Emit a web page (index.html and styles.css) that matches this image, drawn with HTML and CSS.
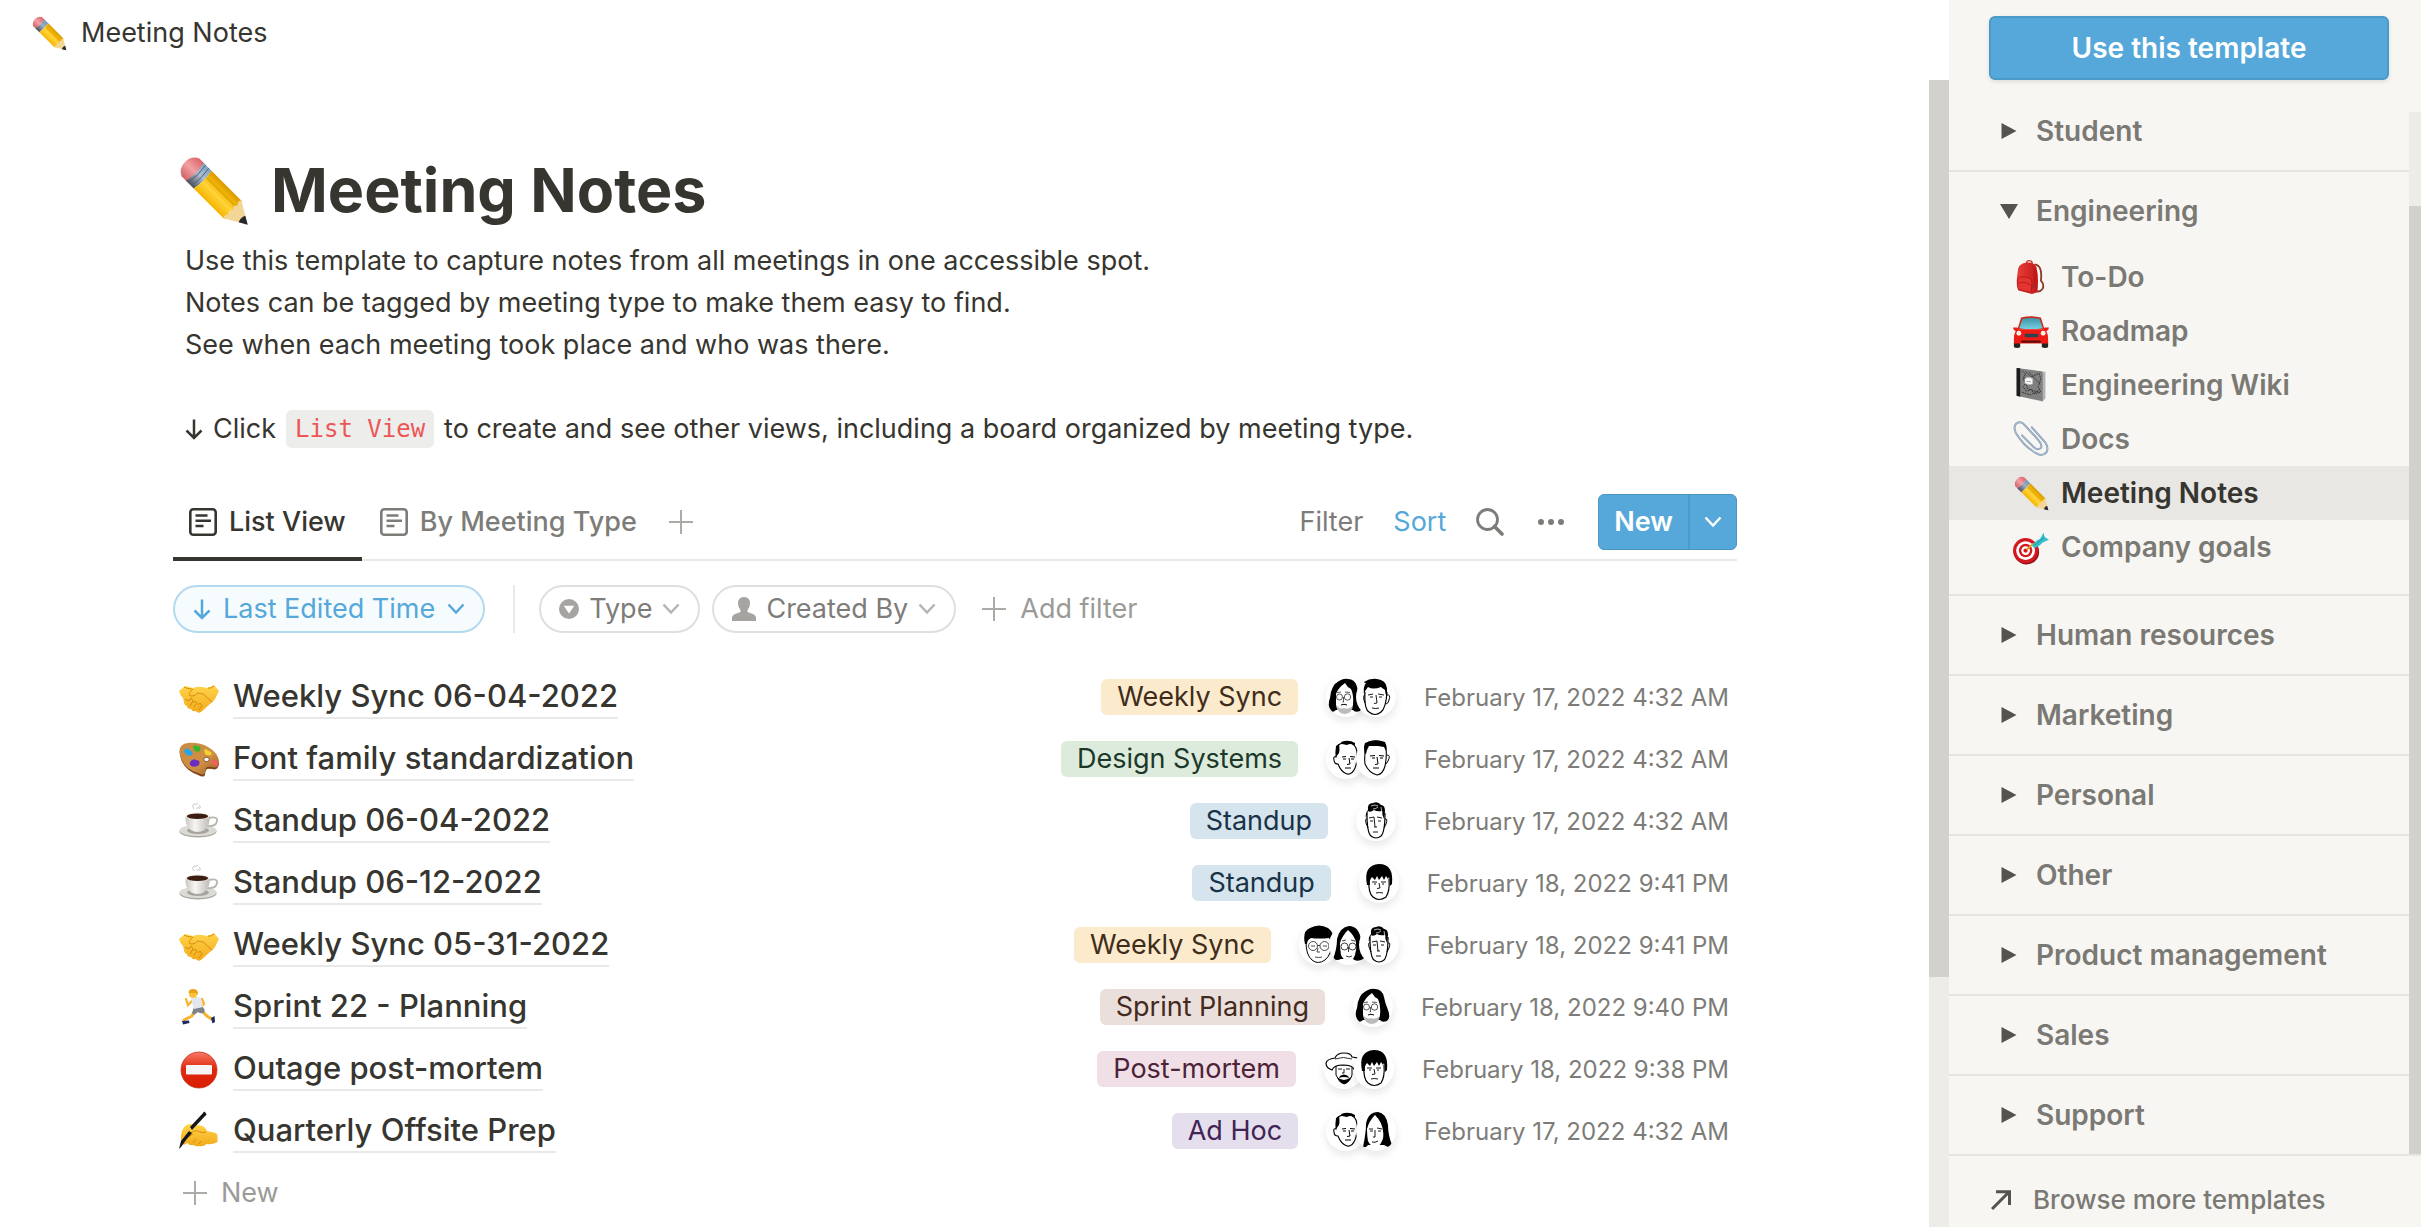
FILE: index.html
```html
<!DOCTYPE html>
<html lang="en">
<head>
<meta charset="utf-8">
<meta name="viewport" content="width=device-width, initial-scale=1">
<title>Meeting Notes</title>
<link rel="stylesheet" href="styles.css">
</head>
<body>
<svg class="sprite" aria-hidden="true">
  <defs>
    <linearGradient id="g-body" x1="0" y1="0" x2="0" y2="1"><stop offset="0" stop-color="#d99a00"/><stop offset=".3" stop-color="#f2b604"/><stop offset=".55" stop-color="#ffd43a"/><stop offset="1" stop-color="#f5b400"/></linearGradient>
    <linearGradient id="g-metal" x1="0" y1="0" x2="0" y2="1"><stop offset="0" stop-color="#7da2c8"/><stop offset=".45" stop-color="#a9bdd3"/><stop offset="1" stop-color="#4c5058"/></linearGradient>
    <linearGradient id="g-pink" x1="0" y1="0" x2="0" y2="1"><stop offset="0" stop-color="#d9656c"/><stop offset=".5" stop-color="#f3a0a2"/><stop offset="1" stop-color="#cf6468"/></linearGradient>
    <linearGradient id="g-skin" x1="0" y1="0" x2="0" y2="1"><stop offset="0" stop-color="#ffd54a"/><stop offset="1" stop-color="#f2a91c"/></linearGradient>
    <linearGradient id="g-wood" x1="0" y1="0" x2="1" y2="1"><stop offset="0" stop-color="#c98a45"/><stop offset=".6" stop-color="#cf8f43"/><stop offset="1" stop-color="#9a5a26"/></linearGradient>
    <linearGradient id="g-stop" x1="0" y1="0" x2="0" y2="1"><stop offset="0" stop-color="#f77a66"/><stop offset=".45" stop-color="#e02a10"/><stop offset="1" stop-color="#d81e05"/></linearGradient>
    <linearGradient id="g-cup" x1="0" y1="0" x2="1" y2="0"><stop offset="0" stop-color="#c9c6c0"/><stop offset=".4" stop-color="#f7f6f3"/><stop offset="1" stop-color="#bfbcb6"/></linearGradient>
    <linearGradient id="g-glass" x1="0" y1="0" x2="0" y2="1"><stop offset="0" stop-color="#3e93a8"/><stop offset="1" stop-color="#74d3e2"/></linearGradient>
    <linearGradient id="g-red" x1="0" y1="0" x2="1" y2="0"><stop offset="0" stop-color="#e8403a"/><stop offset="1" stop-color="#c21717"/></linearGradient>
  </defs>

  <symbol id="pencil" viewBox="0 0 40 40">
    <g transform="translate(5 5) rotate(45)">
      <path d="M8-7H3.500Q-.8-5-.8 0T3.500 7H8z" fill="url(#g-pink)"/>
      <path d="M7-7h6q1.500 7 0 14H7q1.500-7 0-14z" fill="url(#g-metal)"/>
      <path d="M8.500-7q1.400 7 0 14M11-7q1.400 7 0 14" stroke="#58616c" stroke-width=".5" fill="none"/>
      <path d="M13-7h24l2 7-2 7H13q1.500-7 0-14z" fill="url(#g-body)"/>
      <path d="M14 -2.400h23.500" stroke="#d69a05" stroke-width=".6"/>
      <path d="M36.500-7L48.500 0 36.500 7Q35 5.500 37 3.500 34.500 2 37 0 34.500-2 37-3.500 35-5.500 36.500-7z" fill="#f3d596"/>
      <path d="M44-2.600L48.500 0 44 2.600q-1.300-2.600 0-5.200z" fill="#26262c"/>
    </g>
  </symbol>

  <symbol id="handshake" viewBox="0 0 40 40">
    <path d="M0 14l6-5 8 2q5-2 9-1l6 1 6-3 5 6-4 8q-2 3-5 5l-9 8q-3 2-5-1-4 1-5-2-4 0-4-3-3-1-3-4L4 21q-3-3-4-7z" fill="url(#g-skin)"/>
    <path d="M5 10q3 2 8 2M14 12q-5 4-3 7 4 1 8-3l5 1 9 8M6 22l4 2 2-3 2 3-3 5M14 26l2-2 2 2-3 4M19 28l2-2 2 3-3 4M35 9q-3 3-6 2" fill="none" stroke="#d98c0c" stroke-width="1"/>
  </symbol>

  <symbol id="palette" viewBox="0 0 40 40">
    <path d="M1 16Q-1 6 9 5q11-1 20 4 11 6 11 16-1 7-7 5-5-1-6 1t-1 5q-1 3-7 0Q3 30 1 16z" fill="#7d4518"/>
    <path d="M1 15Q-1 5 9 4q11-1 20 4 11 6 11 16-1 6-7 4-5-1-6 1t-1 5q-1 3-7 0Q3 29 1 15z" fill="url(#g-wood)"/>
    <ellipse cx="27.500" cy="20.500" rx="2.700" ry="2.200" fill="#fff" stroke="#6b3b13" stroke-width=".8"/>
    <path d="M5 11q4-3 6 0 4 3 2 5-4 2-6-1-3-2-2-4z" fill="#28a6e8"/>
    <path d="M14 8q1-3 4-1 5 0 3 5-4 2-6-1z" fill="#35b530"/>
    <path d="M25 11q2-2 5 1 4 2 2 4-4 1-6-1z" fill="#f4d12c"/>
    <path d="M32 22q3-3 6 0 2 5-1 5-4-1-5-5z" fill="#f1605c"/>
    <path d="M11 23q3-4 6-2 5 0 3 5-4 3-8 1-2-2-1-4z" fill="#6a2fc0"/>
  </symbol>

  <symbol id="coffee" viewBox="0 0 40 40">
    <ellipse cx="19" cy="30.500" rx="18.500" ry="6" fill="#aaa7a0"/>
    <ellipse cx="19" cy="29.500" rx="18.500" ry="5.500" fill="#dcdad5"/>
    <ellipse cx="19" cy="29.500" rx="11" ry="3.500" fill="#a8a49d"/>
    <path d="M30 17q9-2 8 3-1 6-10 5" fill="none" stroke="#b9b6b0" stroke-width="1.800"/>
    <path d="M6.500 15h24q1 9-5 14-7 4-14 0-6-5-5-14z" fill="url(#g-cup)"/>
    <ellipse cx="18.500" cy="15" rx="12" ry="3.600" fill="#f1efeb"/>
    <ellipse cx="18.500" cy="15.300" rx="10.700" ry="2.800" fill="#3c1d12"/>
    <path d="M15 8q-3-3 0-5 2 1 4-1M20 8q3-2 0-4M17 7q2 1 3-1" fill="none" stroke="#c9c9c9" stroke-width="1"/>
  </symbol>

  <symbol id="runner" viewBox="0 0 40 40">
    <path d="M17 21l-4 8-8 4M23 24l5 5 6 4" fill="none" stroke="#f6b32e" stroke-width="3" stroke-linecap="round"/>
    <path d="M3 34l7-.5 .5 2.500-6.500 1.500zM32 31l3.500-2 .5 6-2.500 1.500z" fill="#1d2a66"/>
    <path d="M14 13l-5 5-2-6M23 12l2 5-4 4" fill="none" stroke="#f6b32e" stroke-width="2.300" stroke-linecap="round"/>
    <path d="M15 20l8-1q4 4 2 7-4 1-6-1l-4 3-2-2z" fill="#7f848c"/>
    <path d="M12 11q5-2 10 0l2 9-9 2q-2-5-3-11z" fill="#e4e7ee"/>
    <circle cx="14" cy="7" r="4" fill="#fbc23c"/>
    <path d="M9.500 6q0-4 5-4t4.500 6l-2-2z" fill="#e8a317"/>
  </symbol>

  <symbol id="stop" viewBox="0 0 40 40">
    <circle cx="20" cy="21" r="18" fill="url(#g-stop)" stroke="#c33520" stroke-width=".8"/>
    <rect x="7" y="16" width="26" height="9.500" rx="1" fill="#f5f5f5"/>
  </symbol>

  <symbol id="writing" viewBox="0 0 40 40">
    <path d="M3 20q2-6 8-7l7 1q8 0 10 6l9 2q2 1 1.500 9-6 3-11 2-3 3-7 2-3 1-6-1-4 1-6-2l-4 2q-4-5-2-12z" fill="url(#g-skin)"/>
    <path d="M12 22q4-4 9-1 3 1 6 0M9 26l5-3M14 32l3-4M20 33l2-3" fill="none" stroke="#d98c0c" stroke-width="1"/>
    <path d="M25 1l-14 15 2 3L27 4zM10 20l-8 10-2 8 2-2 5-7 6-7z" fill="#17171a"/>
    <path d="M25 1l2 3" stroke="#17171a" stroke-width="1.500"/>
  </symbol>

  <symbol id="backpack" viewBox="0 0 40 40">
    <path d="M24 6q9 1 7 18 4 4 2 9-4 5-8 2" fill="none" stroke="#8c3a22" stroke-width="2"/>
    <path d="M15 5q0-4 4-3 3 0 2 4" fill="none" stroke="#c03026" stroke-width="1.500"/>
    <path d="M5 16Q5 5 15 4q9-1 11 5 3 12 1 28l-6 2-15-4q-3-8-1-19z" fill="url(#g-red)"/>
    <path d="M5 23q1-4 7-3 8 0 9 6l-1 11-14-3q-2-5-1-11z" fill="#e4342f" stroke="#a51414" stroke-width=".8"/>
    <path d="M6 27q7-3 14 2M24 11q1 10 0 16" fill="none" stroke="#a51414" stroke-width=".8"/>
    <path d="M24 28l-1 4" stroke="#444" stroke-width="1"/>
  </symbol>

  <symbol id="car" viewBox="0 0 40 40">
    <path d="M1 32h7v6q-3 1.500-7 0zM32 32h7v6q-3 1.500-7 0z" fill="#2a2220"/>
    <path d="M9 5q11-3 22 0l4 13H5z" fill="#c92a1c"/>
    <path d="M10.500 6.500q10-2 19 0L33 17q-13 2-26 0z" fill="url(#g-glass)"/>
    <path d="M0 16l5 0 1 2h28l1-2 5 0-1 3-2 1q2 4 2 8v6H1v-6q0-4 2-8l-2-1z" fill="#ee1c14"/>
    <rect x="13" y="23" width="15" height="4" rx="1" fill="#2c4451"/>
    <circle cx="6.500" cy="22.500" r="2.700" fill="#fff1e6"/><circle cx="33.500" cy="22.500" r="2.700" fill="#fff1e6"/>
    <rect x="9" y="30.500" width="22" height="2.500" rx="1" fill="#5b0f0c"/>
  </symbol>

  <symbol id="notebook" viewBox="0 0 40 40">
    <path d="M5 2l31 3v29l-4 5-27-7z" fill="#e8e8e8"/>
    <path d="M36 5l-4 1v33l4-4z" fill="#b4b4b4"/>
    <path d="M4 1l29 4v33L4 32z" fill="#808080"/>
    <path d="M4 1l4 .5v31.500l-4-1z" fill="#1c1c1c"/>
    <path d="M10 4l4 4-3 5 3 5-3 4 4 5 5-2 4 5 6-2M14 5l6 6 9-4 2 6-3 9 3 6M12 11l4 13 12 4M18 6l12 13M10 28l9 3 10-5" stroke="#2d2d2d" stroke-width="1" stroke-dasharray="2 1" fill="none"/>
    <path d="M13 13q4-3 9 0v6q-4 2-9-1z" fill="#fafafa" stroke="#888" stroke-width=".5"/>
    <path d="M15 16l5 .5" stroke="#888" stroke-width=".8"/>
  </symbol>

  <symbol id="clip" viewBox="0 0 40 40">
    <path d="M21 7l15 17q4 6 1 11-5 5-11 1Q12 28 3 13 0 6 4 2.500q5-3 9 2L28 21q5 6 3 9-4 3-8-1L10 16" fill="none" stroke="#7e95ad" stroke-width="2.200" stroke-linecap="round"/>
    <path d="M21 7l15 17q4 6 1 11-5 5-11 1Q12 28 3 13 0 6 4 2.500q5-3 9 2L28 21q5 6 3 9-4 3-8-1L10 16" fill="none" stroke="#c5d4e3" stroke-width=".8" stroke-linecap="round"/>
  </symbol>

  <symbol id="target" viewBox="0 0 40 40">
    <ellipse cx="15" cy="25.500" rx="14" ry="14" fill="#8e0f14"/>
    <ellipse cx="14" cy="24" rx="14" ry="14" fill="#d4181f"/>
    <ellipse cx="14" cy="24" rx="10.500" ry="10.500" fill="#fff"/>
    <ellipse cx="14" cy="24" rx="7.500" ry="7.500" fill="#d4181f"/>
    <ellipse cx="14" cy="24" rx="4.800" ry="4.800" fill="#fff"/>
    <ellipse cx="14" cy="24" rx="2.400" ry="2.400" fill="#d4181f"/>
    <path d="M15 23l8-7" stroke="#d9a520" stroke-width="2"/>
    <path d="M21 19q3-6 9-8l4-7 1 5 5 3-7 3q-3 4-9 6z" fill="#35bfcc"/>
    <path d="M24 18l11-9" stroke="#188a98" stroke-width=".9"/>
  </symbol>

  <symbol id="ic-list" viewBox="0 0 28 28">
    <rect x="1.300" y="1.300" width="25.400" height="25.400" rx="3" fill="none" stroke="currentColor" stroke-width="2.600"/>
    <path d="M6.500 7.500h12M6.500 12.800h15.500M6.500 18h8" stroke="currentColor" stroke-width="2.500"/>
  </symbol>
  <symbol id="ic-plus" viewBox="0 0 24 24"><path d="M12 0v24M0 12h24" stroke="currentColor" stroke-width="2"/></symbol>
  <symbol id="ic-down" viewBox="0 0 18 22"><path d="M9 1.500v18M1.500 12.500L9 20l7.500-7.500" fill="none" stroke="currentColor" stroke-width="2.500"/></symbol>
  <symbol id="ic-chev" viewBox="0 0 18 12"><path d="M1.500 1.500L9 9.500l7.500-8" fill="none" stroke="currentColor" stroke-width="2.400"/></symbol>
  <symbol id="ic-search" viewBox="0 0 28 28"><circle cx="11.500" cy="11.500" r="10" fill="none" stroke="currentColor" stroke-width="2.800"/><path d="M18.500 18.500l7.500 7.500" stroke="currentColor" stroke-width="3.600" stroke-linecap="round"/></symbol>
  <symbol id="ic-dots" viewBox="0 0 26 6"><g fill="currentColor"><circle cx="3" cy="3" r="3"/><circle cx="13" cy="3" r="3"/><circle cx="23" cy="3" r="3"/></g></symbol>
  <symbol id="ic-select" viewBox="0 0 20 20"><circle cx="10" cy="10" r="10" fill="currentColor"/><path d="M4.800 6.800h10.400L10 14.500z" fill="#fff"/></symbol>
  <symbol id="ic-person" viewBox="0 0 24 24"><path d="M12 0q6 0 6 6.500 0 4-2.500 6.500v2l6.500 2.500q2 1 2 3.500v3H0v-3q0-2.500 2-3.500L8.500 15v-2Q6 10.500 6 6.500 6 0 12 0z" fill="currentColor"/></symbol>
  <symbol id="ic-tri" viewBox="0 0 18 18"><path d="M1.500 1l15 8-15 8z" fill="currentColor"/></symbol>
  <symbol id="ic-tri-open" viewBox="0 0 18 18"><path d="M0 2h18L9 17z" fill="currentColor"/></symbol>
  <symbol id="ic-out" viewBox="0 0 20 20"><path d="M1 19L18 2M5 1.800h13.500V15" fill="none" stroke="currentColor" stroke-width="3"/></symbol>

  <symbol id="av-long-beard" viewBox="0 0 40 40">
    <path d="M5 34Q1 28 4 21 5 8 13 4q5-3 9-2 7 0 9 8 1 6 4 13 3 8-1 11-5 2-7-1L10 33q-3 3-5 1z" fill="#000"/>
    <path d="M10 17q2-6 9-11 2 4 6 6 3 6 2 16-1 8-8 9-8-1-9-9z" fill="#fff"/>
    <g fill="none" stroke="#111" stroke-width=".7"><circle cx="13.500" cy="20" r="3"/><circle cx="21.500" cy="20" r="3.200"/><path d="M17.500 20v5h-1M11 15.500l4-.5M19 15l5 .5"/></g>
    <path d="M15 28q3-1.500 6 0" stroke="#000" stroke-width="1" fill="none"/>
    <path d="M10 28q4 5 8 3 4 2 9-2-1 7-8 8-7 0-9-9z" fill="#777" opacity=".5"/>
  </symbol>
  <symbol id="av-short" viewBox="0 0 40 40">
    <path d="M9 15q-1 17 4 20 6 5 12 0 5-4 6-20" fill="#fff" stroke="#000" stroke-width="1.200"/>
    <path d="M31 18q4-1 2 5-1 4-3 4M9 18q-2 0-1 5l1 3" fill="none" stroke="#000"/>
    <path d="M8 18Q7 9 10 6q-2 0-2-1 6-4 13-3 9 1 10 9l0 8q-2-2-2-6-3-2-4-3-8 3-13 0-3 3-4 8z" fill="#000"/>
    <path d="M12 18l5-1M22 17l6 1M14 20h3M23 20h3M20 18l1 8-3 .5M16 31q4 1 7 0" fill="none" stroke="#000" stroke-width=".9"/>
  </symbol>
  <symbol id="av-bald" viewBox="0 0 40 40">
    <path d="M10 18q-3-1-2 3 0 4 4 4 3 8 9 10 5 1 8-6 3-8 2-16-1-9-9-9-9-1-11 4-1 5-1 10z" fill="#fff" stroke="#000" stroke-width="1.100"/>
    <path d="M31 17q3-1 1 5l-2 3" fill="none" stroke="#000"/>
    <path d="M15 3q8-3 14 1l0 2q-5-2-8 0l-5-1zM10 7l3-2q1 6 0 9l-3 4q-1-6 0-11z" fill="#000"/>
    <path d="M16 18l4-.5M24 17.500l5 .5M17 20h3M25 20h3M23 19l1 6-3 .5M19 29h6" fill="none" stroke="#000"/>
  </symbol>
  <symbol id="av-receding" viewBox="0 0 40 40">
    <path d="M10 6Q8 18 9 25q4 9 12 11 6-1 8-9 2-10 1-18 0-7-10-7-9 0-10 4z" fill="#fff" stroke="#000" stroke-width="1.100"/>
    <path d="M31 16q4 0 1 6l-2 3" fill="none" stroke="#000"/>
    <path d="M9 4q10-5 20-1 2 4 1 9l-2-4-6-1-9 0q-2 3-3 8l-1 0q-2-6 0-11z" fill="#000"/>
    <path d="M14 17l5-.5M23 16.500l5 .5M16 19h3M24 19h3M21 18l1 7-3 .5M17 29h6" fill="none" stroke="#000"/>
  </symbol>
  <symbol id="av-quiff" viewBox="0 0 40 40">
    <path d="M11 12q0 20 4 23 5 4 10 0 4-4 4-23" fill="#fff" stroke="#000" stroke-width="1.200"/>
    <path d="M11 18q-2-1-1 4l2 5M29 18q3-1 1 5l-2 4" fill="none" stroke="#000"/>
    <path d="M10 17Q9 12 12 9q-1-7 5-7 5-2 8 2 4 0 4 6l-1 8q-2-4-2-8-5 1-8-1-4 3-6 1z" fill="#000"/>
    <path d="M15 5q4-2 7 0M25 6l1 6M17 8q3 0 5-2" stroke="#fff" stroke-width=".7" fill="none"/>
    <path d="M13 17l5-1 1 10M21 16l5 1M14 20h3M22 20h3M17 31h5M18 26h3" fill="none" stroke="#000" stroke-width=".9"/>
  </symbol>
  <symbol id="av-bowl" viewBox="0 0 40 40">
    <path d="M10 16q-1 14 4 18 6 5 13 0 4-6 3-18" fill="#fff" stroke="#000" stroke-width="1.200"/>
    <path d="M8 22Q4 2 20 1q15 0 13 20l-2 2q0-5-1-9l-1 2-2-3-2 4-2-4-3 4-2-4-2 4-3-3q-3 3-2 8z" fill="#000"/>
    <path d="M13 19h5M22 19h5M15 21h2M23 21h2M20 20l1 5-3 .5M17 30q3-1 7 0" fill="none" stroke="#000" stroke-width=".9"/>
  </symbol>
  <symbol id="av-glasses" viewBox="0 0 40 40">
    <path d="M7 17q0 13 6 18 6 5 13 0 7-6 7-18" fill="#fff" stroke="#000"/>
    <path d="M6 19Q3 6 11 3q9-5 18 0 7 5 5 15l-2 1q0-4-2-6-10 1-18 0-4 2-4 6z" fill="#000"/>
    <g fill="none" stroke="#222" stroke-width=".8"><circle cx="14" cy="21" r="4.500"/><circle cx="25.500" cy="21" r="4.500"/><path d="M18.500 20.500h2.500M12 21h4M24 21h4M19 23l-1 4h3M16 32q4 1 7 0"/></g>
  </symbol>
  <symbol id="av-long-glasses" viewBox="0 0 40 40">
    <path d="M4 34Q8 24 8 14 11 2 20 1q10 0 12 14 0 8 4 14 1 4-4 6-5 2-8-1l-12 0q-4 2-8 0z" fill="#000"/>
    <path d="M11 18q2-7 8-13 7 6 8 13 1 6-1 12-2 6-7 6-5-1-7-6-1-6-1-12z" fill="#fff"/>
    <g fill="none" stroke="#111" stroke-width=".8"><circle cx="15.500" cy="21.500" r="3.500"/><circle cx="23.500" cy="21.500" r="3.500"/><path d="M19.500 22v5M17 31q3 2 6 0M13 16l4-1M22 15l4 1"/></g>
  </symbol>
  <symbol id="av-hat" viewBox="0 0 40 40">
    <path d="M12 16v10q2 6 8 9 6-2 8-9V16z" fill="#fff" stroke="#000"/>
    <path d="M2 14q1-4 9-5 2-5 9-5t8 4q10 1 10 6 0 5-8 6-2-4-11-4t-11 5q-6-2-6-7z" fill="#fff" stroke="#000" stroke-width="1.200"/>
    <path d="M11 10q8-3 17 0" fill="none" stroke="#000" stroke-width=".8"/>
    <path d="M16 27q4-3 8 0l1 2q-5-2-10 0zM13 28q7 6 14 0-2 6-7 7-5-1-7-7z" fill="#000"/>
    <path d="M14 20h4M22 20h4M20 20v4h-2" stroke="#000" stroke-width=".9" fill="none"/>
  </symbol>
  <symbol id="av-long" viewBox="0 0 40 40">
    <path d="M7 36Q10 22 10 13 12 1 22 1q8 1 10 13 0 10 4 20l-4 2-4-2H12l-2 2z" fill="#000"/>
    <path d="M11 18q2-8 8-14 7 7 8 16 1 6-1 10-3 7-7 6-5-1-7-6-1-5-1-12z" fill="#fff"/>
    <path d="M13 18h4M21 17l5 1M19 19v7h-2M16 31q3 1 6-1M14 20h3M22 20h3" stroke="#000" stroke-width=".9" fill="none"/>
  </symbol>
</svg>

<div class="app">
  <main class="page">
    <header class="topbar">
      <svg class="emoji emoji-sm" aria-hidden="true"><use href="#pencil"/></svg>
      <span>Meeting Notes</span>
    </header>
    <div class="scroller">
      <div class="content">
        <div class="title-row">
          <svg class="emoji emoji-xl" aria-hidden="true"><use href="#pencil"/></svg>
          <h1>Meeting Notes</h1>
        </div>
        <div class="intro">
          <p>Use this template to capture notes from all meetings in one accessible spot.</p>
          <p>Notes can be tagged by meeting type to make them easy to find.</p>
          <p>See when each meeting took place and who was there.</p>
          <p class="hint"><svg class="arrow" aria-hidden="true"><use href="#ic-down"/></svg>Click <code>List View</code> to create and see other views, including a board organized by meeting type.</p>
        </div>

        <div class="toolbar">
          <div class="tabs" role="tablist">
            <button class="tab tab-active" role="tab" aria-selected="true"><svg class="tab-icon"><use href="#ic-list"/></svg>List View</button>
            <button class="tab" role="tab" aria-selected="false"><svg class="tab-icon"><use href="#ic-list"/></svg>By Meeting Type</button>
            <button class="tab-add" aria-label="Add view"><svg class="plus"><use href="#ic-plus"/></svg></button>
          </div>
          <div class="actions">
            <button class="action">Filter</button>
            <button class="action action-on">Sort</button>
            <button class="action" aria-label="Search"><svg class="search"><use href="#ic-search"/></svg></button>
            <button class="action" aria-label="More"><svg class="dots"><use href="#ic-dots"/></svg></button>
            <div class="split">
              <button class="split-main">New</button>
              <button class="split-more" aria-label="New from template"><svg class="chev"><use href="#ic-chev"/></svg></button>
            </div>
          </div>
        </div>

        <div class="filters">
          <button class="pill pill-sort"><svg class="arrow"><use href="#ic-down"/></svg>Last Edited Time<svg class="chev"><use href="#ic-chev"/></svg></button>
          <span class="divider"></span>
          <button class="pill"><svg class="select"><use href="#ic-select"/></svg>Type<svg class="chev"><use href="#ic-chev"/></svg></button>
          <button class="pill"><svg class="person"><use href="#ic-person"/></svg>Created By<svg class="chev"><use href="#ic-chev"/></svg></button>
          <button class="add-filter"><svg class="plus"><use href="#ic-plus"/></svg>Add filter</button>
        </div>

        <ul class="notes">
          <li class="note">
            <svg class="emoji" aria-hidden="true"><use href="#handshake"/></svg><a href="#">Weekly Sync 06-04-2022</a>
            <span class="tag tag-yellow">Weekly Sync</span>
            <span class="people"><svg><use href="#av-long-beard"/></svg><svg><use href="#av-short"/></svg></span>
            <time>February 17, 2022 4:32 AM</time>
          </li>
          <li class="note">
            <svg class="emoji" aria-hidden="true"><use href="#palette"/></svg><a href="#">Font family standardization</a>
            <span class="tag tag-green">Design Systems</span>
            <span class="people"><svg><use href="#av-bald"/></svg><svg><use href="#av-receding"/></svg></span>
            <time>February 17, 2022 4:32 AM</time>
          </li>
          <li class="note">
            <svg class="emoji" aria-hidden="true"><use href="#coffee"/></svg><a href="#">Standup 06-04-2022</a>
            <span class="tag tag-blue">Standup</span>
            <span class="people"><svg><use href="#av-quiff"/></svg></span>
            <time>February 17, 2022 4:32 AM</time>
          </li>
          <li class="note">
            <svg class="emoji" aria-hidden="true"><use href="#coffee"/></svg><a href="#">Standup 06-12-2022</a>
            <span class="tag tag-blue">Standup</span>
            <span class="people"><svg><use href="#av-bowl"/></svg></span>
            <time>February 18, 2022 9:41 PM</time>
          </li>
          <li class="note">
            <svg class="emoji" aria-hidden="true"><use href="#handshake"/></svg><a href="#">Weekly Sync 05-31-2022</a>
            <span class="tag tag-yellow">Weekly Sync</span>
            <span class="people"><svg><use href="#av-glasses"/></svg><svg><use href="#av-long-glasses"/></svg><svg><use href="#av-quiff"/></svg></span>
            <time>February 18, 2022 9:41 PM</time>
          </li>
          <li class="note">
            <svg class="emoji" aria-hidden="true"><use href="#runner"/></svg><a href="#">Sprint 22 - Planning</a>
            <span class="tag tag-brown">Sprint Planning</span>
            <span class="people"><svg><use href="#av-long-beard"/></svg></span>
            <time>February 18, 2022 9:40 PM</time>
          </li>
          <li class="note">
            <svg class="emoji" aria-hidden="true"><use href="#stop"/></svg><a href="#">Outage post-mortem</a>
            <span class="tag tag-pink">Post-mortem</span>
            <span class="people"><svg><use href="#av-hat"/></svg><svg><use href="#av-bowl"/></svg></span>
            <time>February 18, 2022 9:38 PM</time>
          </li>
          <li class="note">
            <svg class="emoji" aria-hidden="true"><use href="#writing"/></svg><a href="#">Quarterly Offsite Prep</a>
            <span class="tag tag-purple">Ad Hoc</span>
            <span class="people"><svg><use href="#av-bald"/></svg><svg><use href="#av-long"/></svg></span>
            <time>February 17, 2022 4:32 AM</time>
          </li>
        </ul>
        <button class="new-row"><svg class="plus"><use href="#ic-plus"/></svg>New</button>
      </div>
      <div class="track"><div class="thumb"></div></div>
    </div>
  </main>

  <aside class="sidebar">
    <button class="use">Use this template</button>
    <div class="side-body">
      <nav class="sections">
        <section><button class="head" aria-expanded="false"><svg class="tri"><use href="#ic-tri"/></svg>Student</button></section>
        <section class="open">
          <button class="head" aria-expanded="true"><svg class="tri"><use href="#ic-tri-open"/></svg>Engineering</button>
          <a class="item" href="#"><svg class="emoji emoji-sm"><use href="#backpack"/></svg>To-Do</a>
          <a class="item" href="#"><svg class="emoji emoji-sm"><use href="#car"/></svg>Roadmap</a>
          <a class="item" href="#"><svg class="emoji emoji-sm"><use href="#notebook"/></svg>Engineering Wiki</a>
          <a class="item" href="#"><svg class="emoji emoji-sm"><use href="#clip"/></svg>Docs</a>
          <a class="item item-active" href="#" aria-current="page"><svg class="emoji emoji-sm"><use href="#pencil"/></svg>Meeting Notes</a>
          <a class="item" href="#"><svg class="emoji emoji-sm"><use href="#target"/></svg>Company goals</a>
        </section>
        <section><button class="head" aria-expanded="false"><svg class="tri"><use href="#ic-tri"/></svg>Human resources</button></section>
        <section><button class="head" aria-expanded="false"><svg class="tri"><use href="#ic-tri"/></svg>Marketing</button></section>
        <section><button class="head" aria-expanded="false"><svg class="tri"><use href="#ic-tri"/></svg>Personal</button></section>
        <section><button class="head" aria-expanded="false"><svg class="tri"><use href="#ic-tri"/></svg>Other</button></section>
        <section><button class="head" aria-expanded="false"><svg class="tri"><use href="#ic-tri"/></svg>Product management</button></section>
        <section><button class="head" aria-expanded="false"><svg class="tri"><use href="#ic-tri"/></svg>Sales</button></section>
        <section><button class="head" aria-expanded="false"><svg class="tri"><use href="#ic-tri"/></svg>Support</button></section>
      </nav>
      <div class="track side-track"><div class="thumb"></div></div>
    </div>
    <a class="browse" href="#"><svg class="out"><use href="#ic-out"/></svg>Browse more templates</a>
  </aside>
</div>
</body>
</html>
```
FILE: styles.css
```css
* { box-sizing: border-box; }

body {
  margin: 0;
  font-family: Inter, "Liberation Sans", sans-serif;
  font-size: 28px;
  line-height: 42px;
  color: #37352f;
  background: #fff;
}

button {
  margin: 0;
  padding: 0;
  border: 0;
  background: none;
  font: inherit;
  color: inherit;
  cursor: pointer;
  white-space: nowrap;
}

a { color: inherit; text-decoration: none; }
svg { display: block; flex: none; }
.sprite { position: absolute; width: 0; height: 0; }

.emoji { width: 40px; height: 40px; }
.emoji-sm { width: 36px; height: 36px; }
.emoji-xl { width: 72px; height: 72px; }
.plus { width: 24px; height: 24px; color: #acaba8; }
.arrow { width: 18px; height: 22px; }
.chev { width: 18px; height: 12px; }

.app {
  display: grid;
  grid-template-columns: minmax(0, 1fr) 472px;
  height: 100vh;
  overflow: hidden;
}

/* Page */
.page { display: flex; flex-direction: column; min-height: 0; }
.topbar {
  display: flex;
  align-items: center;
  gap: 14px;
  height: 80px;
  padding: 0 31px 14px;
  font-size: 27px;
}
.scroller { display: flex; flex: 1; min-height: 0; }
.content { flex: 1; min-width: 0; padding: 72px 192px 0 173px; }
.track { width: 20px; background: #edece9; }
.thumb { height: 78.2%; background: #d3d1cb; }

.title-row {
  display: flex;
  align-items: center;
  gap: 22px;
  height: 76px;
  padding-left: 4px;
}
h1 { margin: 0; font-size: 61px; line-height: 76px; font-weight: 700; }

.intro { padding: 12px 12px 0; font-size: 27px; }
.intro p { margin: 0; }
.intro .hint { display: flex; align-items: center; gap: 10px; margin-top: 42px; white-space: nowrap; }
.hint code {
  padding: 0 9px;
  border-radius: 6px;
  background: #ededeb;
  color: #eb5757;
  font-family: "DejaVu Sans Mono", monospace;
  font-size: 24px;
  line-height: 38px;
}

.toolbar {
  display: flex;
  justify-content: space-between;
  height: 76px;
  margin-top: 35px;
  border-bottom: 2px solid #e9e9e7;
}
.tabs { display: flex; gap: 2px; }
.tab {
  display: flex;
  align-items: center;
  gap: 12px;
  height: 76px;
  padding: 2px 16px 0;
  border-bottom: 4px solid transparent;
  font-size: 27px;
  font-weight: 500;
  color: #7d7c78;
}
.tab-active { border-bottom-color: #37352f; color: #37352f; }
.tab-icon { width: 28px; height: 28px; }
.tab-add { padding: 0 14px; }
.actions { display: flex; align-items: center; gap: 30px; color: #7d7c78; font-size: 27px; }
.action-on { color: #55a8d9; }
.search { width: 28px; height: 28px; }
.dots { width: 26px; height: 6px; margin: 0 4px; }
.split {
  display: flex;
  height: 56px;
  border: 1px solid #4a97c4;
  border-radius: 6px;
  background: #55a8d9;
  color: #fff;
}
.split-main { padding: 0 15px; border-right: 2px solid #4d9ac7; font-weight: 600; }
.split-more { padding: 0 14px; }

.filters { display: flex; align-items: center; gap: 12px; margin-top: 24px; font-size: 27px; }
.pill {
  display: flex;
  align-items: center;
  gap: 10px;
  height: 48px;
  padding: 0 18px;
  border: 2px solid #dfdfde;
  border-radius: 24px;
  color: #7d7c78;
}
.pill .chev { color: #b5b4b1; }
.pill-sort { gap: 12px; border-color: #b3d9ee; background: #f6fbfe; color: #55a8d9; }
.pill-sort .chev { color: inherit; }
.select { width: 20px; height: 20px; color: #a5a4a0; }
.person { width: 24px; height: 24px; color: #a5a4a0; }
.divider { width: 2px; height: 48px; margin: 0 12px 0 16px; background: #e9e9e7; }
.add-filter { display: flex; align-items: center; gap: 14px; margin-left: 14px; color: #9b9a97; }

/* Notes */
.notes { margin: 33px 0 0; padding: 0 8px 0 6px; list-style: none; }
.note { display: flex; align-items: center; height: 62px; }
.note a {
  margin: 0 auto 0 14px;
  border-bottom: 2px solid #e9e9e7;
  font-size: 31px;
  font-weight: 500;
}
.tag { padding: 0 16px; border-radius: 6px; font-size: 27px; line-height: 36px; }
.tag-yellow { background: #fbeacc; color: #402c1b; }
.tag-green { background: #dcebdb; color: #1c3829; }
.tag-blue { background: #d6e4ee; color: #183347; }
.tag-brown { background: #eadfda; color: #442a1e; }
.tag-pink { background: #f0dfe7; color: #4c2337; }
.tag-purple { background: #e5deed; color: #412454; }
.people { display: flex; margin: 0 28px; }
.people svg {
  width: 40px;
  height: 40px;
  border-radius: 50%;
  background: #fff;
  box-shadow: 0 4px 8px rgba(15, 15, 15, .1);
}
.people svg + svg { margin-left: -10px; }
.note time { padding-top: 2px; font-size: 24px; color: #7d7c78; }
.new-row {
  display: flex;
  align-items: center;
  gap: 14px;
  height: 62px;
  padding-left: 10px;
  font-size: 27px;
  color: #9b9a97;
}

/* Sidebar */
.sidebar {
  display: flex;
  flex-direction: column;
  min-height: 0;
  background: #f7f6f3;
  color: #7a7974;
}
.use {
  height: 64px;
  margin: 16px 32px 0 40px;
  border: 2px solid #4c9ac8;
  border-radius: 6px;
  background: #55a8d9;
  box-shadow: 0 2px 4px rgba(15, 15, 15, .1);
  color: #fff;
  font-weight: 600;
}
.side-body { display: flex; flex: 1; min-height: 0; padding-top: 12px; }
.sections { flex: 1; overflow: hidden; }
.sections section { border-bottom: 2px solid #e6e5e2; }
.sections section:last-child { border-bottom: 0; }
.sections .open { padding-bottom: 20px; }
.head {
  display: flex;
  align-items: center;
  gap: 18px;
  width: 100%;
  height: 78px;
  padding-left: 51px;
  font-size: 28px;
  font-weight: 600;
}
.tri { width: 18px; height: 18px; color: #55534e; }
.item {
  display: flex;
  align-items: center;
  gap: 12px;
  height: 54px;
  padding-left: 64px;
  font-size: 28px;
  font-weight: 600;
}
.item-active { background: #e8e7e4; color: #37352f; }
.side-track { width: 12px; margin-top: 20px; padding-top: 94px; }
.side-track .thumb { height: 100%; }
.browse {
  display: flex;
  align-items: center;
  gap: 22px;
  height: 73px;
  padding: 16px 0 0 42px;
  border-top: 2px solid #e6e5e2;
  font-size: 26px;
  font-weight: 500;
}
.out { width: 20px; height: 20px; color: #55534e; }
```
